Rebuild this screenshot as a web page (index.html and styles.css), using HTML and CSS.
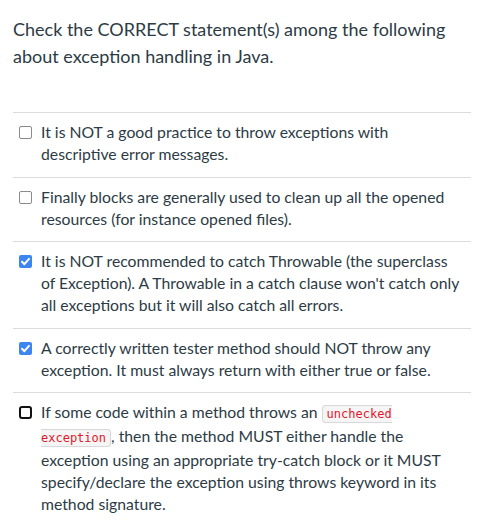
FILE: index.html
```html
<!DOCTYPE html>
<html>
<head>
<meta charset="utf-8">
<link rel="stylesheet" href="styles.css">
</head>
<body>
<div class="question">
  <div class="prompt">Check the CORRECT statement(s) among the following about exception handling in Java.</div>
  <div class="answers">
    <div class="answer">
      <span class="box"></span>
      <div class="text">It is NOT a good practice to throw exceptions with descriptive error messages.</div>
    </div>
    <div class="answer">
      <span class="box"></span>
      <div class="text">Finally blocks are generally used to clean up all the opened resources (for instance opened files).</div>
    </div>
    <div class="answer">
      <span class="box checked"><svg viewBox="0 0 13 13" width="13" height="13"><path d="M3 6.8 L5.4 9.2 L10 3.9" fill="none" stroke="#fff" stroke-width="2" stroke-linecap="round" stroke-linejoin="round"/></svg></span>
      <div class="text">It is NOT recommended to catch Throwable (the superclass of Exception). A Throwable in a catch clause won't catch only all exceptions but it will also catch all errors.</div>
    </div>
    <div class="answer">
      <span class="box checked"><svg viewBox="0 0 13 13" width="13" height="13"><path d="M3 6.8 L5.4 9.2 L10 3.9" fill="none" stroke="#fff" stroke-width="2" stroke-linecap="round" stroke-linejoin="round"/></svg></span>
      <div class="text">A correctly written tester method should NOT throw any exception. It must always return with either true or false.</div>
    </div>
    <div class="answer last">
      <span class="box focused"></span>
      <div class="text">If some code within a method throws an <code>unchecked exception</code>, then the method MUST either handle the exception using an appropriate try-catch block or it MUST specify/declare the exception using throws keyword in its method signature.</div>
    </div>
  </div>
</div>
</body>
</html>
```
FILE: styles.css
```css
html, body {
  margin: 0;
  padding: 0;
  background: #fff;
}
body {
  font-family: Lato, "Liberation Sans", sans-serif;
  color: #2d3b45;
}
.question {
  width: 458px;
  margin-left: 13px;
  padding-top: 16px;
}
.prompt {
  font-size: 18px;
  line-height: 27px;
  margin-bottom: 42px;
}
.answer {
  display: flex;
  align-items: flex-start;
  border-top: 1px solid #dcdcdc;
  padding: 8px 9px 11.5px 6px;
}
.box {
  flex: 0 0 auto;
  box-sizing: border-box;
  width: 13px;
  height: 13px;
  margin-top: 5px;
  margin-right: 9px;
  border: 1px solid #8a8a8a;
  border-radius: 2px;
  background: #fff;
  display: flex;
}
.box.checked {
  border: none;
  background: #3d85f0;
}
.box.focused {
  border: 2px solid #111;
  border-radius: 3px;
}
.text {
  font-size: 15.75px;
  line-height: 22px;
}
code {
  font-family: "DejaVu Sans Mono", "Liberation Mono", monospace;
  font-size: 12px;
  color: #e0182d;
  background: #f5f5f5;
  border: 1px solid #d8d8d8;
  border-radius: 4px;
  padding: 1px 4px;
}
```
